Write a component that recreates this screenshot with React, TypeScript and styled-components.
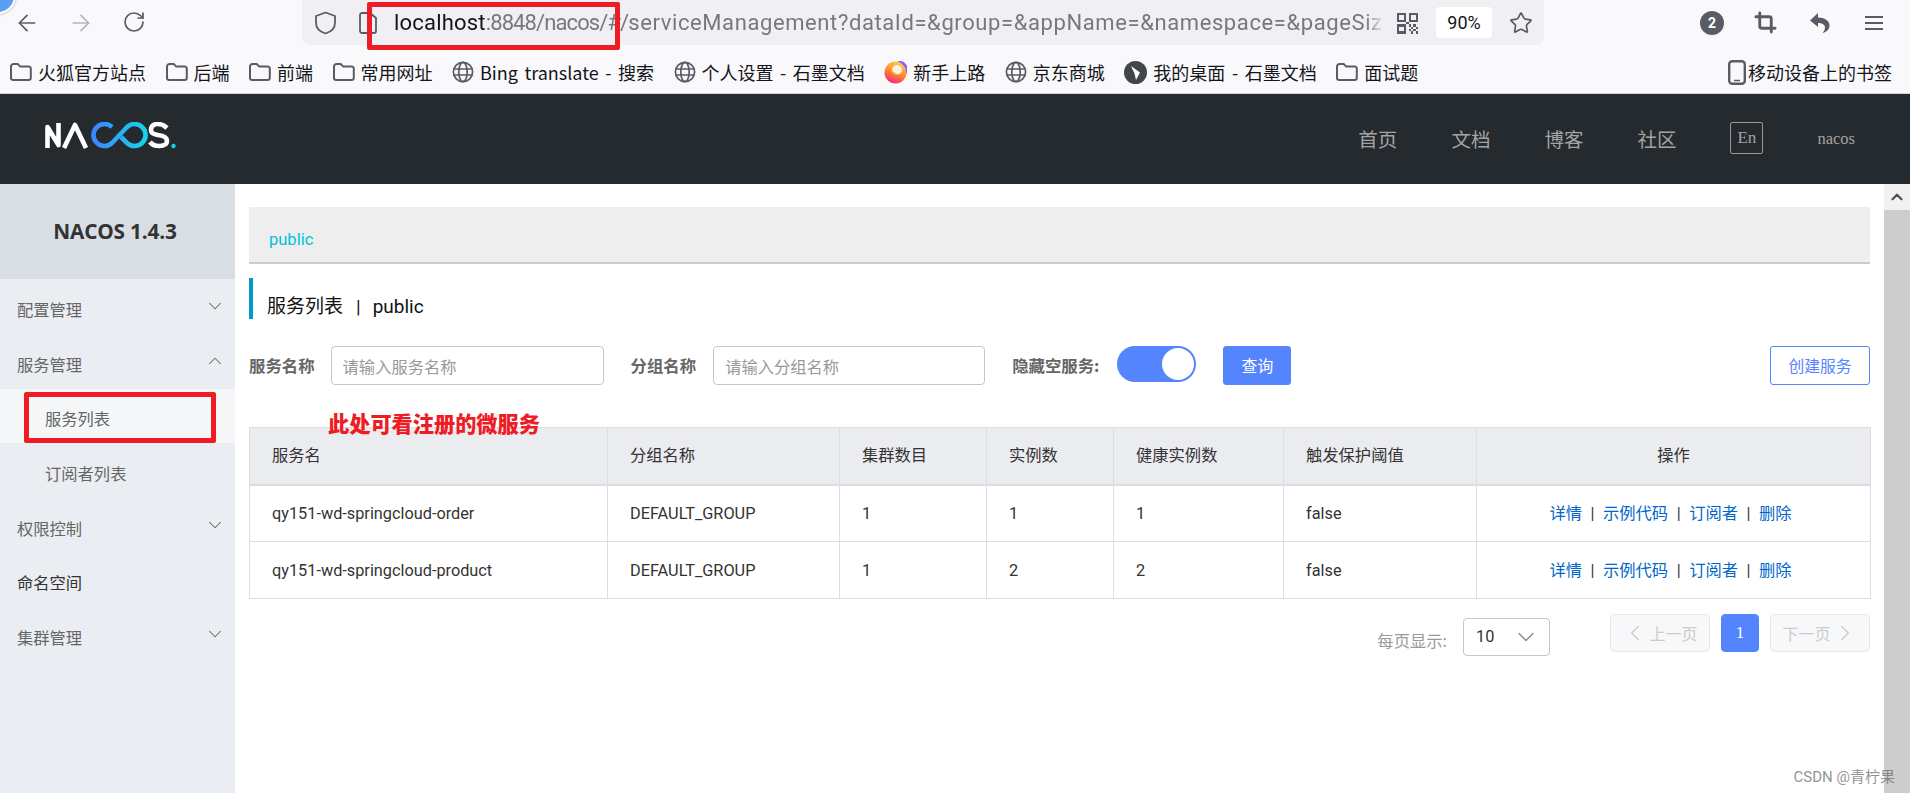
import React from "react";
import styled, {createGlobalStyle} from "styled-components";
import {ArrowLeft, ArrowRight, RotateCw, Star, Crop, ChevronDown, ChevronUp, ChevronLeft, ChevronRight} from "lucide-react";

const CJK = `"Noto Sans CJK SC", sans-serif`;
const FONT = `Roboto, ${CJK}`;

const Global = createGlobalStyle`
	* {
		box-sizing: border-box;
	}
	html, body {
		margin: 0;
		padding: 0;
		background: #fff;
		overflow: hidden;
	}
	body {
		font-family: ${FONT};
	}
`;

const Page = styled.div`
	position: relative;
	width: 1910px;
	height: 793px;
	overflow: hidden;
	display: flex;
	flex-direction: column;
`;

/* browser chrome */
const Toolbar = styled.div`
	height: 45px;
	background: #f9f9fb;
	display: flex;
	color: #5b5b66;
`;

const NavGroup = styled.div`
	width: 302px;
	padding: 10px 0 0 14px;
	display: flex;
	gap: 28px;
	align-items: flex-start;
`;

const AddressBar = styled.div`
	width: 1242px;
	height: 45px;
	background: #f0f0f4;
	border-radius: 0 0 8px 8px;
	display: flex;
	align-items: center;
	padding-left: 12px;
`;

const PageIcon = styled.svg`
	margin-left: 22px;
`;

const Url = styled.div`
	margin-left: 17px;
	width: 991px;
	flex: none;
	white-space: nowrap;
	font: 22px/45px ${FONT};
	letter-spacing: 0.6px;
	color: #77777f;
	-webkit-mask-image: linear-gradient(to right, #000 98%, transparent);
	mask-image: linear-gradient(to right, #000 98%, transparent);
`;

const UrlHost = styled.span`
	letter-spacing: 0.2px;
	color: #15141a;
`;

const UrlPort = styled.span`
	letter-spacing: -0.9px;
`;

const QrIcon = styled.svg`
	margin-left: 12px;
`;

const Zoom = styled.div`
	margin-left: 18px;
	width: 56px;
	height: 31px;
	background: #fff;
	border-radius: 4px;
	color: #15141a;
	font: 18px/31px ${FONT};
	text-align: center;
`;

const StarWrap = styled.div`
	margin-left: 17px;
	display: flex;
`;

const Extensions = styled.div`
	flex: 1;
	display: flex;
	align-items: center;
	padding-left: 156px;
`;

const Badge = styled.div`
	width: 24px;
	height: 24px;
	border-radius: 50%;
	background: #5b5b66;
	color: #fff;
	font: 700 14px/24px ${FONT};
	text-align: center;
`;

const ExtIcon = styled.div<{$gap: number}>`
	margin-left: ${(p) => p.$gap}px;
	display: flex;
`;

const Bookmarks = styled.div`
	height: 49px;
	background: #f9f9fb;
	border-bottom: 1px solid #d4d4d8;
	padding: 6px 18px 0 10px;
	display: flex;
	align-items: center;
	gap: 19.5px;
	font: 18px/24px ${CJK};
	word-spacing: 2.5px;
	color: #15141a;
`;

const Bookmark = styled.div<{$right?: boolean}>`
	display: flex;
	align-items: center;
	gap: ${(p) => (p.$right ? 2 : 6)}px;
	white-space: nowrap;
	margin-left: ${(p) => (p.$right ? "auto" : 0)};
`;

const Favicon = styled.svg`
	flex: none;
`;

/* nacos header */
const Header = styled.header`
	height: 90px;
	background: #252a2f;
	display: flex;
	align-items: center;
	padding: 0 55px 0 45px;
`;

const LogoMark = styled.svg`
	margin-top: -7px;
`;

const Nav = styled.nav`
	margin-left: auto;
	display: flex;
	align-items: center;
	gap: 54px;
	font: 19.5px/24px ${CJK};
	color: #a3a3a3;
`;

const LangBox = styled.div`
	width: 33px;
	height: 32px;
	margin-bottom: 2px;
	border: 1px solid #999;
	border-radius: 2px;
	font: 17px/29px "Liberation Serif", serif;
	text-align: center;
`;

const User = styled.div`
	font: 16.5px/24px "Liberation Serif", serif;
	color: #a3a3a3;
`;

/* body */
const Body = styled.div`
	flex: 1;
	display: flex;
	min-height: 0;
`;

const Sidebar = styled.aside`
	width: 235px;
	flex: none;
	background: #eaedf1;
`;

const Version = styled.div`
	height: 95px;
	background: #d9dee4;
	padding: 34px 5px 0 0;
	text-align: center;
	font: 700 20.8px/26px "Open Sans", sans-serif;
	letter-spacing: -0.2px;
	color: #333;
`;

const Menu = styled.div`
	padding-top: 3px;
`;

const MenuRow = styled.div<{$dark?: boolean}>`
	height: 54.6px;
	padding: 0 9px 0 17px;
	display: flex;
	align-items: center;
	justify-content: space-between;
	font: 16.3px/20px ${CJK};
	color: ${(p) => (p.$dark ? "#333" : "#666")};

	svg {
		margin-top: -6px;
		color: #666;
	}
`;

const SubRow = styled.div<{$active?: boolean}>`
	height: 54.6px;
	padding-left: 45px;
	display: flex;
	align-items: center;
	font: 16.3px/20px ${CJK};
	color: #666;
	${(p) =>
		p.$active &&
		`
		height: 54px;
		margin: -2px 0 2.6px;
		padding-top: 4px;
		background: #f4f6f8;
	`}
`;

const Main = styled.main`
	flex: 1;
	min-width: 0;
	padding: 23px 14px 0;
	background: #fff;
	color: #333;
`;

const Crumb = styled.div`
	height: 57px;
	background: #eee;
	border-bottom: 2px solid #ccc;
	padding: 22px 0 0 20px;
	font: 16.5px/22px ${FONT};
	color: #00c1de;
`;

const Title = styled.div`
	margin-top: 14px;
	height: 41px;
	border-left: 4px solid #09c;
	padding: 16px 0 0 14px;
	display: flex;
	align-items: center;
	font: 19px/24px ${FONT};
	color: #111;
`;

const TitleSep = styled.span`
	margin: 0 12px 0 13px;
`;

const FilterRow = styled.div`
	margin-top: 27px;
	height: 39px;
	display: flex;
	align-items: flex-start;
`;

const FilterLabel = styled.label<{$gap: number}>`
	margin-right: ${(p) => p.$gap}px;
	font: 600 16.4px/39px ${CJK};
	color: #666;
	white-space: nowrap;
`;

const TextInput = styled.input<{$width: number; $gap: number}>`
	width: ${(p) => p.$width}px;
	margin-right: ${(p) => p.$gap}px;
	height: 39px;
	padding: 0 11px;
	border: 1px solid #c4c6cf;
	border-radius: 4px;
	outline: none;
	background: #fff;
	font: 16.3px/37px ${CJK};

	&::placeholder {
		color: #999;
		opacity: 1;
	}
`;

const Switch = styled.div`
	width: 79px;
	height: 36px;
	margin: 0 27px 0 1px;
	border-radius: 18px;
	background: #5584ff;
	padding: 2px;
	display: flex;
	justify-content: flex-end;

	i {
		width: 32px;
		height: 32px;
		border-radius: 50%;
		background: #fff;
	}
`;

const Button = styled.button<{$outline?: boolean; $push?: boolean}>`
	width: ${(p) => (p.$outline ? 100 : 68)}px;
	height: 39px;
	margin-left: ${(p) => (p.$push ? "auto" : 0)};
	border: 1px solid #5584ff;
	border-radius: 3px;
	padding: 0;
	background: ${(p) => (p.$outline ? "#fff" : "#5584ff")};
	color: ${(p) => (p.$outline ? "#5584ff" : "#fff")};
	font: 15.8px/37px ${CJK};
`;

const Table = styled.table`
	margin-top: 42px;
	width: 1621px;
	table-layout: fixed;
	border-collapse: collapse;
	font: 16.3px/22px ${FONT};
	color: #333;
`;

const Th = styled.th<{$center?: boolean}>`
	height: 57px;
	padding: 0 0 0 ${(p) => (p.$center ? 0 : 22)}px;
	background: #ebecf0;
	border: 1px solid #dcdee3;
	border-bottom-width: 2px;
	font-weight: 400;
	text-align: ${(p) => (p.$center ? "center" : "left")};
`;

const Td = styled.td<{$center?: boolean}>`
	height: 57px;
	padding: ${(p) => (p.$center ? "2px 6px 0 0" : "2px 0 0 22px")};
	border: 1px solid #dcdee3;
	text-align: ${(p) => (p.$center ? "center" : "left")};
`;

const Action = styled.a`
	color: #06c;
	text-decoration: none;
`;

const Divider = styled.span`
	margin: 0 8.5px;
	color: #333;
`;

const Pager = styled.div`
	margin-top: 15px;
	display: flex;
	justify-content: flex-end;
	align-items: flex-start;
`;

const PagerLabel = styled.span`
	margin: 16px 16px 0 0;
	font: 16.3px/20px ${CJK};
	color: #999;
`;

const PageSize = styled.div`
	width: 87px;
	height: 38px;
	margin: 4px 60px 0 0;
	padding: 0 9px 0 12px;
	border: 1px solid #c4c6cf;
	border-radius: 4px;
	display: flex;
	align-items: center;
	justify-content: space-between;
	font: 16.3px/36px ${FONT};
	color: #333;

	svg {
		color: #888;
	}
`;

const PageButton = styled.div<{$current?: boolean}>`
	height: 38px;
	width: ${(p) => (p.$current ? 38 : 100)}px;
	margin-left: ${(p) => (p.$current ? 11 : 0)}px;
	margin-right: ${(p) => (p.$current ? 11 : 0)}px;
	border: 1px solid ${(p) => (p.$current ? "#5584ff" : "#e6e7eb")};
	border-radius: 4px;
	background: ${(p) => (p.$current ? "#5584ff" : "#f7f8fa")};
	color: ${(p) => (p.$current ? "#fff" : "#ccc")};
	display: flex;
	align-items: center;
	justify-content: center;
	gap: 1px;
	font: ${(p) => (p.$current ? `17px/36px "Liberation Serif", serif` : `16px/36px ${CJK}`)};
`;

const Scrollbar = styled.div`
	width: 26px;
	flex: none;
	background: #cdcdcd;
`;

const ScrollUp = styled.div`
	height: 26px;
	background: #f1f1f1;
	display: flex;
	align-items: center;
	justify-content: center;
	color: #505050;
`;

/* things lying over the page */
const RedBox = styled.div<{$x: number; $y: number; $w: number; $h: number}>`
	position: absolute;
	left: ${(p) => p.$x}px;
	top: ${(p) => p.$y}px;
	width: ${(p) => p.$w}px;
	height: ${(p) => p.$h}px;
	border: 5px solid #ee1c25;
	border-radius: 2px;
	pointer-events: none;
`;

const Note = styled.div`
	position: absolute;
	left: 328px;
	top: 409px;
	font: 900 21.2px/28px ${CJK};
	color: #ee1c25;
	white-space: nowrap;
`;

const Watermark = styled.div`
	position: absolute;
	right: 15px;
	top: 767px;
	font: 15px/20px ${FONT};
	color: rgba(110, 110, 110, 0.75);
	white-space: nowrap;
`;

const CornerBlob = styled.div`
	position: absolute;
	left: -20px;
	top: -22px;
	width: 36px;
	height: 36px;
	border-radius: 50%;
	background: #5b9df5;
	border: 2px solid #fff;
	box-shadow: 0 0 3px rgba(0, 0, 0, 0.35);
`;

const Folder = () => (
	<Favicon width="22" height="18" viewBox="0 0 22 18" fill="none" stroke="#5b5b66" strokeWidth="2">
		<path d="M1 3.5A2.5 2.5 0 0 1 3.5 1h4.2l2.6 2.6h8.2A2 2 0 0 1 20.8 5.6v9.2a2.2 2.2 0 0 1-2.2 2.2H3.2A2.2 2.2 0 0 1 1 14.8z" />
	</Favicon>
);

const Globe = () => (
	<Favicon width="22" height="22" viewBox="0 0 22 22" fill="none" stroke="#5b5b66" strokeWidth="1.7">
		<circle cx="11" cy="11" r="9.6" />
		<ellipse cx="11" cy="11" rx="4.2" ry="9.6" />
		<path d="M1.4 8h19.2M1.4 14h19.2" />
	</Favicon>
);

const Firefox = () => (
	<Favicon width="23" height="23" viewBox="0 0 23 23">
		<defs>
			<linearGradient id="ff" x1="0.7" y1="0" x2="0.3" y2="1">
				<stop offset="0" stopColor="#ffd24f" />
				<stop offset="0.5" stopColor="#ff8a30" />
				<stop offset="1" stopColor="#f5257c" />
			</linearGradient>
		</defs>
		<circle cx="11.5" cy="11.500" r="11" fill="url(#ff)" />
		<path d="M13 .6a11 11 0 0 1 9 12.400A8 8 0 0 0 13 .6z" fill="#9059ff" />
		<circle cx="13" cy="9" r="5" fill="#fff3d6" />
		<path d="M8 9a5.500 5.500 0 0 0 9 3.500A7.500 7.500 0 0 1 8 9z" fill="#ff980e" />
	</Favicon>
);

const Shimo = () => (
	<Favicon width="23" height="23" viewBox="0 0 23 23">
		<circle cx="11.5" cy="11.5" r="11.5" fill="#41464c" />
		<path d="M7 5l9 6.5-4 7.5-1.5-6.5z" fill="#fff" />
	</Favicon>
);

const columns = [358, 232, 147, 127, 170, 193, 394];
const heads = ["服务名", "分组名称", "集群数目", "实例数", "健康实例数", "触发保护阈值"];

const services = [
	{name: "qy151-wd-springcloud-order", instances: 1, healthy: 1},
	{name: "qy151-wd-springcloud-product", instances: 2, healthy: 2},
];

const bookmarks = [
	{icon: <Folder />, label: "火狐官方站点"},
	{icon: <Folder />, label: "后端"},
	{icon: <Folder />, label: "前端"},
	{icon: <Folder />, label: "常用网址"},
	{icon: <Globe />, label: "Bing translate - 搜索"},
	{icon: <Globe />, label: "个人设置 - 石墨文档"},
	{icon: <Firefox />, label: "新手上路"},
	{icon: <Globe />, label: "京东商城"},
	{icon: <Shimo />, label: "我的桌面 - 石墨文档"},
	{icon: <Folder />, label: "面试题"},
];

const Logo = () => (
	<LogoMark width="132" height="27" viewBox="0 0 132 27" fill="none" strokeWidth="4.600">
		<defs>
			<linearGradient id="loop" x1="0" y1="0" x2="1" y2="0">
				<stop offset="0" stopColor="#3b86ff" />
				<stop offset="1" stopColor="#17d4e8" />
			</linearGradient>
		</defs>
		<path d="M2.500 26V5l11 18V1" stroke="#fff" strokeLinejoin="round" />
		<path d="M19 26L30 3l11 23" stroke="#fff" strokeLinejoin="round" />
		<path d="M67 5A11 11 0 1 0 67 21L82 5A11 11 0 1 1 82 21L76 15" stroke="url(#loop)" />
		<path d="M122 6Q118 2 113 2Q106 2 106 8Q106 12 113 13Q122 14 122 19Q122 24 114 24Q108 24 105 20" stroke="#fff" />
		<circle cx="128.500" cy="24" r="2.200" fill="#17d4e8" />
	</LogoMark>
);

export default function App() {
	return (
		<Page>
			<Global />
			<Toolbar>
				<NavGroup>
					<ArrowLeft size={26} strokeWidth={1.6} />
					<ArrowRight size={26} strokeWidth={1.6} color="#b5b5ba" />
					<RotateCw size={24} strokeWidth={1.7} />
				</NavGroup>
				<AddressBar>
					<svg width="23" height="24" viewBox="0 0 23 24" fill="none" stroke="#5b5b66" strokeWidth="1.8">
						<path d="M11.5 1.5L21 5v7c0 5-4 8.800-9.500 10.500C6 20.800 2 17 2 12V5z" strokeLinejoin="round" />
					</svg>
					<PageIcon width="18" height="22" viewBox="0 0 18 22" fill="none" stroke="#5b5b66" strokeWidth="1.8">
						<path d="M3 1h8l6 5v13a2 2 0 0 1-2 2H3a2 2 0 0 1-2-2V3a2 2 0 0 1 2-2z" />
					</PageIcon>
					<Url>
						<UrlHost>localhost</UrlHost>
						<UrlPort>:8848/nacos/#/</UrlPort>
						serviceManagement?dataId=&amp;group=&amp;appName=&amp;namespace=&amp;pageSiz
					</Url>
					<QrIcon width="21" height="22" viewBox="0 0 9 9" fill="#5b5b66" shapeRendering="crispEdges">
						<path
							fillRule="evenodd"
							d="M0 0h4v4H0zM1 1v2h2V1zM5 0h4v4H5zM6 1v2h2V1zM0 5h4v4H0zM1 6v2h2V6zM4 4h1v1H4zM5 5h1v1H5zM7 5h1v1H7zM6 6h1v1H6zM8 6h1v1H8zM5 7h1v1H5zM7 7h1v1H7zM6 8h1v1H6zM8 8h1v1H8z"
						/>
					</QrIcon>
					<Zoom>90%</Zoom>
					<StarWrap>
						<Star size={24} strokeWidth={1.7} />
					</StarWrap>
				</AddressBar>
				<Extensions>
					<Badge>2</Badge>
					<ExtIcon $gap={30}>
						<Crop size={23} strokeWidth={3} />
					</ExtIcon>
					<ExtIcon $gap={32}>
						<svg width="21" height="22" viewBox="0 0 21 22" fill="#5b5b66">
							<path d="M9 1L1 8.500 9 15v-4c4 0 7 1.500 7 4.500 0 2-1 4-2.500 5.500C18 20 20.500 17 20.500 13.500 20.500 8.500 15.500 5.500 9 5.500z" />
						</svg>
					</ExtIcon>
					<ExtIcon $gap={35}>
						<svg width="18" height="18" viewBox="0 0 18 18" stroke="#5b5b66" strokeWidth="2">
							<path d="M0 3h18M0 9h18M0 15h18" />
						</svg>
					</ExtIcon>
				</Extensions>
			</Toolbar>
			<Bookmarks>
				{bookmarks.map((b) => (
					<Bookmark key={b.label}>
						{b.icon}
						{b.label}
					</Bookmark>
				))}
				<Bookmark $right>
					<Favicon width="18" height="25" viewBox="0 0 18 25" fill="none" stroke="#5b5b66" strokeWidth="2.400">
						<rect x="1.200" y="1.200" width="15.600" height="22.600" rx="3" />
						<path d="M6 20.500h6" strokeWidth="1.500" />
					</Favicon>
					移动设备上的书签
				</Bookmark>
			</Bookmarks>

			<Header>
				<Logo />
				<Nav>
					<span>首页</span>
					<span>文档</span>
					<span>博客</span>
					<span>社区</span>
					<LangBox>En</LangBox>
					<User>nacos</User>
				</Nav>
			</Header>

			<Body>
				<Sidebar>
					<Version>NACOS 1.4.3</Version>
					<Menu>
						<MenuRow>
							配置管理
							<ChevronDown size={22} strokeWidth={1.1} />
						</MenuRow>
						<MenuRow>
							服务管理
							<ChevronUp size={22} strokeWidth={1.1} />
						</MenuRow>
						<SubRow $active>服务列表</SubRow>
						<SubRow>订阅者列表</SubRow>
						<MenuRow>
							权限控制
							<ChevronDown size={22} strokeWidth={1.1} />
						</MenuRow>
						<MenuRow $dark>命名空间</MenuRow>
						<MenuRow>
							集群管理
							<ChevronDown size={22} strokeWidth={1.1} />
						</MenuRow>
					</Menu>
				</Sidebar>

				<Main>
					<Crumb>public</Crumb>
					<Title>
						服务列表<TitleSep>|</TitleSep>public
					</Title>
					<FilterRow>
						<FilterLabel $gap={16}>服务名称</FilterLabel>
						<TextInput $width={273} $gap={27} placeholder="请输入服务名称" />
						<FilterLabel $gap={17}>分组名称</FilterLabel>
						<TextInput $width={272} $gap={27} placeholder="请输入分组名称" />
						<FilterLabel $gap={17}>隐藏空服务:</FilterLabel>
						<Switch>
							<i />
						</Switch>
						<Button>查询</Button>
						<Button $outline $push>
							创建服务
						</Button>
					</FilterRow>

					<Table>
						<colgroup>
							{columns.map((w, i) => (
								<col key={i} width={w} />
							))}
						</colgroup>
						<thead>
							<tr>
								{heads.map((h) => (
									<Th key={h}>{h}</Th>
								))}
								<Th $center>操作</Th>
							</tr>
						</thead>
						<tbody>
							{services.map((s) => (
								<tr key={s.name}>
									<Td>{s.name}</Td>
									<Td>DEFAULT_GROUP</Td>
									<Td>1</Td>
									<Td>{s.instances}</Td>
									<Td>{s.healthy}</Td>
									<Td>false</Td>
									<Td $center>
										<Action>详情</Action>
										<Divider>|</Divider>
										<Action>示例代码</Action>
										<Divider>|</Divider>
										<Action>订阅者</Action>
										<Divider>|</Divider>
										<Action>删除</Action>
									</Td>
								</tr>
							))}
						</tbody>
					</Table>

					<Pager>
						<PagerLabel>每页显示:</PagerLabel>
						<PageSize>
							10
							<ChevronDown size={28} strokeWidth={1.1} />
						</PageSize>
						<PageButton>
							<ChevronLeft size={26} strokeWidth={1.3} />
							上一页
						</PageButton>
						<PageButton $current>1</PageButton>
						<PageButton>
							下一页
							<ChevronRight size={26} strokeWidth={1.3} />
						</PageButton>
					</Pager>
				</Main>

				<Scrollbar>
					<ScrollUp>
						<ChevronUp size={18} strokeWidth={3} />
					</ScrollUp>
				</Scrollbar>
			</Body>

			<CornerBlob />
			<RedBox $x={367} $y={2} $w={253} $h={48} />
			<RedBox $x={24} $y={392} $w={192} $h={51} />
			<Note>此处可看注册的微服务</Note>
			<Watermark>CSDN @青柠果</Watermark>
		</Page>
	);
}
